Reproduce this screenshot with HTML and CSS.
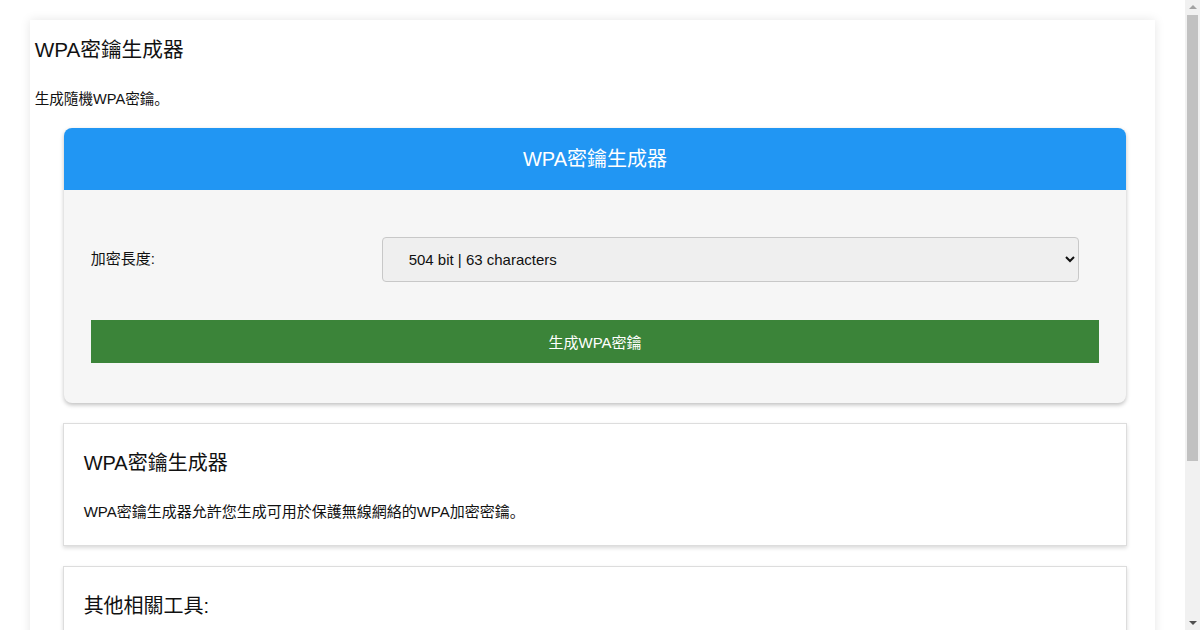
FILE: index.html
```html
<!DOCTYPE html>
<html lang="zh">
<head>
    <meta charset="UTF-8">
    <meta name="viewport" content="width=device-width, initial-scale=1.0">
    <title>WPA密鑰生成器</title>
    <link rel="stylesheet" href="styles.css">
</head>
<body>
    <div class="container">
        <h1 class="page-title">WPA密鑰生成器</h1>
        <p class="page-desc">生成隨機WPA密鑰。</p>

        <div class="tool-area">
            <!-- generator card -->
            <div class="generator">
                <div class="generator-head">WPA密鑰生成器</div>
                <div class="generator-body">
                    <div class="form-row">
                        <label for="keyLength">加密長度:</label>
                        <select id="keyLength">
                            <option>64 bit | 8 characters</option>
                            <option>128 bit | 16 characters</option>
                            <option>256 bit | 32 characters</option>
                            <option selected>504 bit | 63 characters</option>
                        </select>
                    </div>
                    <button class="btn-generate" onclick="generateKey()">生成WPA密鑰</button>
                </div>
            </div>

            <div class="info-card">
                <h2>WPA密鑰生成器</h2>
                <p>WPA密鑰生成器允許您生成可用於保護無線網絡的WPA加密密鑰。</p>
            </div>

            <div class="info-card">
                <h2>其他相關工具:</h2>
                <ul class="tool-links">
                    <li><a href="#">WEP密鑰生成器</a></li>
                    <li><a href="#">隨機密碼生成器</a></li>
                    <li><a href="#">MD5哈希生成器</a></li>
                    <li><a href="#">SHA256哈希生成器</a></li>
                    <li><a href="#">UUID生成器</a></li>
                </ul>
            </div>
        </div>
    </div>

    <!-- window scrollbar -->
    <div class="scrollbar">
        <span class="arrow-up"></span>
        <div class="thumb"></div>
        <span class="arrow-down"></span>
    </div>

    <script>
        // Build a random key from the selected length
        function generateKey() {
            var chars = 'ABCDEFGHIJKLMNOPQRSTUVWXYZabcdefghijklmnopqrstuvwxyz0123456789';
            var text = document.getElementById('keyLength').value;
            var len = parseInt(text.split('|')[1], 10) || 63;
            var key = '';
            for (var i = 0; i < len; i++) {
                key += chars.charAt(Math.floor(Math.random() * chars.length));
            }
            console.log(key);
        }
    </script>
</body>
</html>
```

FILE: styles.css
```css
body {
    font-family: "Liberation Sans", "Noto Sans CJK SC", sans-serif;
    line-height: 1.15;
    margin: 0 15px 0 0;
    padding: 0;
    background-color: #fff;
    color: #111;
}
.container {
    width: 95%;
    margin: 20px auto;
    padding: 0 5px 30px;
    box-sizing: border-box;
    background-color: #fff;
    box-shadow: 0 0 10px rgba(0, 0, 0, 0.1);
}
.page-title {
    font-size: 20.7px;
    font-weight: normal;
    margin: 0;
    padding-top: 18px;
}
.page-desc {
    font-size: 14.6px;
    margin: 29px 0 0;
}
.tool-area {
    margin: 20px 23px 0 28px;
}
.generator {
    margin: 0 1px;
    border-radius: 8px;
    background-color: #f6f6f6;
    box-shadow: 0 2px 4px rgba(0, 0, 0, 0.25);
}
.generator-head {
    height: 62px;
    line-height: 62px;
    text-align: center;
    font-size: 20px;
    color: #fff;
    background-color: #2196f3;
    border-radius: 8px 8px 0 0;
}
.generator-body {
    padding: 47px 27px 40px;
}
.form-row {
    display: grid;
    grid-template-columns: 291px 1fr;
    align-items: center;
    margin: 0 20px 38px 0;
}
.form-row label {
    font-size: 15px;
}
.form-row select {
    height: 45px;
    padding: 0 0 0 22px;
    font-family: inherit;
    font-size: 15px;
    color: #111;
    background-color: #efefef;
    border: 1px solid #c8c8c8;
    border-radius: 4px;
}
.btn-generate {
    display: block;
    width: 100%;
    height: 43px;
    border: none;
    font-family: inherit;
    font-size: 15px;
    color: #fff;
    background-color: #3b8439;
    cursor: pointer;
}
.info-card {
    margin-top: 20px;
    padding: 28px 20px 25px;
    background-color: #fff;
    border: 1px solid #ddd;
    box-shadow: 0 2px 4px rgba(0, 0, 0, 0.15);
}
.info-card h2 {
    font-size: 20px;
    font-weight: normal;
    margin: 0 0 28px;
}
.info-card p {
    font-size: 15px;
    margin: 0;
}
.tool-links {
    margin: 0;
    padding-left: 20px;
    font-size: 15px;
    line-height: 25px;
}
.tool-links a {
    color: #2196f3;
    text-decoration: none;
}

/* fake window scrollbar */
.scrollbar {
    position: fixed;
    top: 0;
    right: 0;
    width: 15px;
    height: 100%;
    background-color: #f1f1f1;
    display: flex;
    flex-direction: column;
    align-items: center;
}
.scrollbar .thumb {
    width: 11px;
    height: 446px;
    background-color: #c1c1c1;
}
.arrow-up,
.arrow-down {
    display: block;
    width: 0;
    height: 0;
    border-left: 4px solid transparent;
    border-right: 4px solid transparent;
}
.arrow-up {
    margin: 5px 0 6px;
    border-bottom: 4px solid #a3a3a3;
}
.arrow-down {
    margin: auto 0 5px;
    border-top: 4px solid #505050;
}
```
